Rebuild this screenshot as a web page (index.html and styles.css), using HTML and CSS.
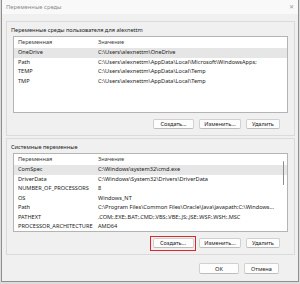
FILE: index.html
```html
<!DOCTYPE html>
<html lang="ru">
<head>
    <meta charset="UTF-8">
    <title>Переменные среды</title>
    <link rel="stylesheet" href="styles.css">
</head>
<body>
    <div class="window">
        <div class="titlebar">
            <span class="title">Переменные среды</span>
            <span class="close">✕</span>
        </div>

        <div class="group group-user">
            <div class="group-label">Переменные среды пользователя для alexnettm</div>
            <div class="list list-user">
                <div class="row head"><span class="col-name">Переменная</span><span>Значение</span></div>
                <div class="row selected"><span class="col-name">OneDrive</span><span>C:\Users\alexnettm\OneDrive</span></div>
                <div class="row"><span class="col-name">Path</span><span>C:\Users\alexnettm\AppData\Local\Microsoft\WindowsApps;</span></div>
                <div class="row"><span class="col-name">TEMP</span><span>C:\Users\alexnettm\AppData\Local\Temp</span></div>
                <div class="row"><span class="col-name">TMP</span><span>C:\Users\alexnettm\AppData\Local\Temp</span></div>
            </div>
            <div class="buttons">
                <button class="btn btn-new">Создать...</button>
                <button class="btn btn-edit">Изменить...</button>
                <button class="btn btn-del">Удалить</button>
            </div>
        </div>

        <div class="group group-system">
            <div class="group-label">Системные переменные</div>
            <div class="list list-system">
                <div class="row head"><span class="col-name">Переменная</span><span>Значение</span></div>
                <div class="row selected"><span class="col-name">ComSpec</span><span>C:\Windows\system32\cmd.exe</span></div>
                <div class="row"><span class="col-name">DriverData</span><span>C:\Windows\System32\Drivers\DriverData</span></div>
                <div class="row"><span class="col-name">NUMBER_OF_PROCESSORS</span><span>8</span></div>
                <div class="row"><span class="col-name">OS</span><span>Windows_NT</span></div>
                <div class="row"><span class="col-name">Path</span><span>C:\Program Files\Common Files\Oracle\Java\javapath;C:\Windows...</span></div>
                <div class="row"><span class="col-name">PATHEXT</span><span>.COM;.EXE;.BAT;.CMD;.VBS;.VBE;.JS;.JSE;.WSF;.WSH;.MSC</span></div>
                <div class="row"><span class="col-name">PROCESSOR_ARCHITECTURE</span><span>AMD64</span></div>
                <div class="scrollbar"></div>
            </div>
            <div class="buttons">
                <span class="mark"><button class="btn btn-new">Создать...</button></span>
                <button class="btn btn-edit">Изменить...</button>
                <button class="btn btn-del">Удалить</button>
            </div>
        </div>

        <div class="footer">
            <button class="btn btn-ok">OK</button>
            <button class="btn btn-cancel">Отмена</button>
        </div>
    </div>
</body>
</html>
```

FILE: styles.css
```css
/* Окно диалога */
body {
    margin: 0;
    padding: 0;
    background-color: #dcdcdc;
    font-family: 'Noto Sans', 'Liberation Sans', sans-serif;
    font-size: 5.6px;
    color: #1a1a1a;
}

.window {
    width: 298px;
    height: 282px;
    margin: 0 1px;
    box-sizing: border-box;
    border: 1px solid #8f8f8f;
    border-top: none;
    background-color: #f0f0f0;
    display: flex;
    flex-direction: column;
}

/* Заголовок */
.titlebar {
    height: 14px;
    padding: 0 4px 0 4px;
    background-color: #f9f9f9;
    display: flex;
    align-items: center;
    justify-content: space-between;
}

.title {
    color: #8a8a8a;
    font-size: 5.8px;
}

.close {
    color: #9a9a9a;
    font-size: 6px;
}

/* Группы */
.group {
    margin: 7px 3px 0 4px;
    border: 1px solid #dadada;
    padding: 0 6px 0 6px;
}

.group-system {
    margin-top: 2px;
}

.group-label {
    margin: 5px 0 3px -2px;
    line-height: 6px;
}

/* Списки */
.list {
    position: relative;
    height: 75px;
    border: 1px solid #b4b4b4;
    background-color: #ffffff;
    overflow: hidden;
}

.list-system {
    height: 77px;
}

.row {
    display: flex;
    height: 9.5px;
    line-height: 9.5px;
    padding-left: 4px;
    white-space: nowrap;
}

.row.head {
    height: 11px;
    line-height: 11px;
    color: #3c3c3c;
}

.row.selected {
    background-color: #e6e6e6;
}

.col-name {
    width: 80px;
    flex-shrink: 0;
}

.scrollbar {
    position: absolute;
    top: 7px;
    right: 3px;
    width: 1.5px;
    height: 24px;
    border-radius: 1px;
    background-color: #8c8c8c;
}

/* Кнопки */
.buttons {
    display: flex;
    align-items: center;
    justify-content: flex-end;
    gap: 5px;
    margin: 6px 8px 6px 0;
}

.btn {
    height: 10px;
    padding: 0;
    border: 1px solid #d0d0d0;
    border-bottom-color: #bdbdbd;
    border-radius: 2px;
    background-color: #fdfdfd;
    font-family: inherit;
    font-size: 5.6px;
    color: #1a1a1a;
    line-height: 8px;
}

.btn-new { width: 41px; }
.btn-edit { width: 42px; }
.btn-del { width: 34px; }

/* Красная рамка-пометка вокруг кнопки */
.mark {
    display: flex;
    margin: -3px -2px -3px 0;
    padding: 1.5px;
    border: 1.5px solid #d9272e;
}

.footer {
    display: flex;
    justify-content: flex-end;
    gap: 5px;
    margin: 8px 19px 0 0;
}

.btn-ok { width: 40px; height: 11px; }
.btn-cancel { width: 35px; height: 11px; }
```
